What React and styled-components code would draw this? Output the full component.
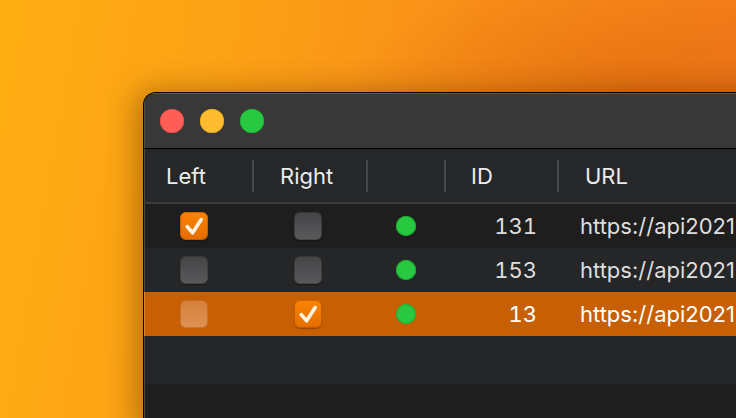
import React from "react";
import styled, { createGlobalStyle } from "styled-components";

const GlobalStyle = createGlobalStyle`
  html, body {
    margin: 0;
    padding: 0;
    overflow: hidden;
  }
  body {
    font-family: Inter, "Noto Sans", "Liberation Sans", sans-serif;
  }
  * { box-sizing: border-box; }
`;

const rows = [
  { left: true, right: false, id: 131, url: "https://api2021.example.com/v1/items" },
  { left: false, right: false, id: 153, url: "https://api2021.example.com/v1/users" },
  { left: false, right: true, id: 13, url: "https://api2021.example.com/v1/orders", selected: true },
];

const Check = () => (
  <svg width="28" height="28" viewBox="0 0 28 28">
    <path
      d="M7.2 14.6 L12.6 20.8 L21.2 7.6"
      fill="none"
      stroke="#fff3e6"
      strokeWidth="3.6"
      strokeLinecap="round"
      strokeLinejoin="round"
    />
  </svg>
);

export default function App() {
  return (
    <Desktop>
      <GlobalStyle />
      <Window>
        <TitleBar>
          <Light $color="#ff5f57" $edge="#e2463f" />
          <Light $color="#febc2e" $edge="#e1a116" />
          <Light $color="#28c840" $edge="#1aab29" />
        </TitleBar>
        <HeaderRow>
          <HeaderCell $pad={21}>Left</HeaderCell>
          <HeaderCell $divider $pad={26}>Right</HeaderCell>
          <HeaderCell $divider />
          <HeaderCell $divider $pad={25}>ID</HeaderCell>
          <HeaderCell $divider $pad={26}>URL</HeaderCell>
        </HeaderRow>
        {rows.map((r, i) => (
          <Row key={r.id} $alt={i % 2 === 1} $selected={r.selected}>
            <BoxCell $pad={35}>
              <Checkbox $checked={r.left} $onSelected={r.selected}>
                {r.left && <Check />}
              </Checkbox>
            </BoxCell>
            <BoxCell $pad={41}>
              <Checkbox $checked={r.right} $onSelected={r.selected}>
                {r.right && <Check />}
              </Checkbox>
            </BoxCell>
            <DotCell>
              <Dot />
            </DotCell>
            <IdCell $selected={r.selected}>{r.id}</IdCell>
            <UrlCell $selected={r.selected}>{r.url}</UrlCell>
          </Row>
        ))}
        <Row $alt $tall />
        <Row />
      </Window>
    </Desktop>
  );
}

const Desktop = styled.div`
  width: 736px;
  height: 418px;
  overflow: hidden;
  padding: 92px 0 0 143px;
  background:
    radial-gradient(ellipse 420px 160px at 640px 90px, rgba(200, 80, 0, 0.35), transparent 70%),
    linear-gradient(100deg, #feae12 0%, #fca115 30%, #f88d18 60%, #f47a1b 100%);
`;

const Window = styled.div`
  width: 700px;
  height: 340px;
  border: 1px solid #000;
  border-right: none;
  border-bottom: none;
  border-radius: 13px 0 0 0;
  overflow: hidden;
  background: #1e1e1e;
  box-shadow:
    inset 1px 1px 0 rgba(255, 255, 255, 0.22),
    -6px 0 30px rgba(90, 40, 0, 0.45);
`;

const TitleBar = styled.div`
  height: 56px;
  display: flex;
  align-items: center;
  gap: 16px;
  padding-left: 15px;
  background: #383838;
  border-top: 1px solid #5a5a5a;
  border-left: 1px solid #4e4e4e;
  border-bottom: 1px solid #000;
`;

const Light = styled.span`
  width: 24px;
  height: 24px;
  border-radius: 50%;
  background: ${(p) => p.$color};
  box-shadow: inset 0 0 0 0.5px ${(p) => p.$edge};
`;

const gridCols = "108px 114px 78px 113px 1fr";

const HeaderRow = styled.div`
  display: grid;
  grid-template-columns: ${gridCols};
  height: 55px;
  background: #262729;
  border-bottom: 2px solid #3a3b3e;
  border-left: 1px solid #4a4a4c;
`;

const HeaderCell = styled.div`
  display: flex;
  align-items: center;
  gap: ${(p) => p.$pad || 0}px;
  padding-left: ${(p) => (p.$divider ? 0 : p.$pad || 0)}px;
  margin-left: ${(p) => (p.$divider ? -1 : 0)}px;
  font-size: 22px;
  color: #ececec;
  white-space: nowrap;

  &::before {
    content: "";
    display: ${(p) => (p.$divider ? "block" : "none")};
    width: 2px;
    height: 32px;
    background: #46474a;
  }
`;

const Row = styled.div`
  display: grid;
  grid-template-columns: ${gridCols};
  height: ${(p) => (p.$tall ? 48 : 44)}px;
  background: ${(p) => (p.$selected ? "#c75f04" : p.$alt ? "#252628" : "#1e1e1e")};
  border-left: 1px solid ${(p) => (p.$selected ? "#d78640" : "#4a4a4c")};
`;

const BoxCell = styled.div`
  display: flex;
  align-items: center;
  padding-left: ${(p) => p.$pad}px;
`;

const Checkbox = styled.div`
  width: 28px;
  height: 28px;
  border-radius: 6px;
  display: flex;
  align-items: center;
  justify-content: center;
  background: ${(p) =>
    p.$checked
      ? "linear-gradient(#fa8400, #e46d00)"
      : p.$onSelected
      ? "linear-gradient(#d6803a, #dd9254)"
      : "linear-gradient(#444446, #5a5a5c)"};
  box-shadow: ${(p) =>
    p.$checked
      ? "inset 0 0 0 1px rgba(150, 60, 0, 0.45), 0 1px 1px rgba(0,0,0,0.25)"
      : p.$onSelected
      ? "inset 0 0 0 1px rgba(160, 70, 0, 0.35)"
      : "inset 0 0 0 1px rgba(0, 0, 0, 0.2), 0 1px 1px rgba(0,0,0,0.3)"};
`;

const DotCell = styled.div`
  display: flex;
  align-items: center;
  justify-content: center;
`;

const Dot = styled.span`
  width: 20px;
  height: 20px;
  border-radius: 50%;
  background: #28c840;
  box-shadow: inset 0 0 0 1px #1fae33;
`;

const IdCell = styled.div`
  display: flex;
  align-items: center;
  justify-content: flex-end;
  padding-right: 21px;
  font-size: 22px;
  color: ${(p) => (p.$selected ? "#ffffff" : "#dedede")};
  font-variant-numeric: tabular-nums;
`;

const UrlCell = styled.div`
  display: flex;
  align-items: center;
  padding-left: 22px;
  font-size: 22px;
  white-space: nowrap;
  overflow: hidden;
  color: ${(p) => (p.$selected ? "#ffffff" : "#dedede")};
`;
